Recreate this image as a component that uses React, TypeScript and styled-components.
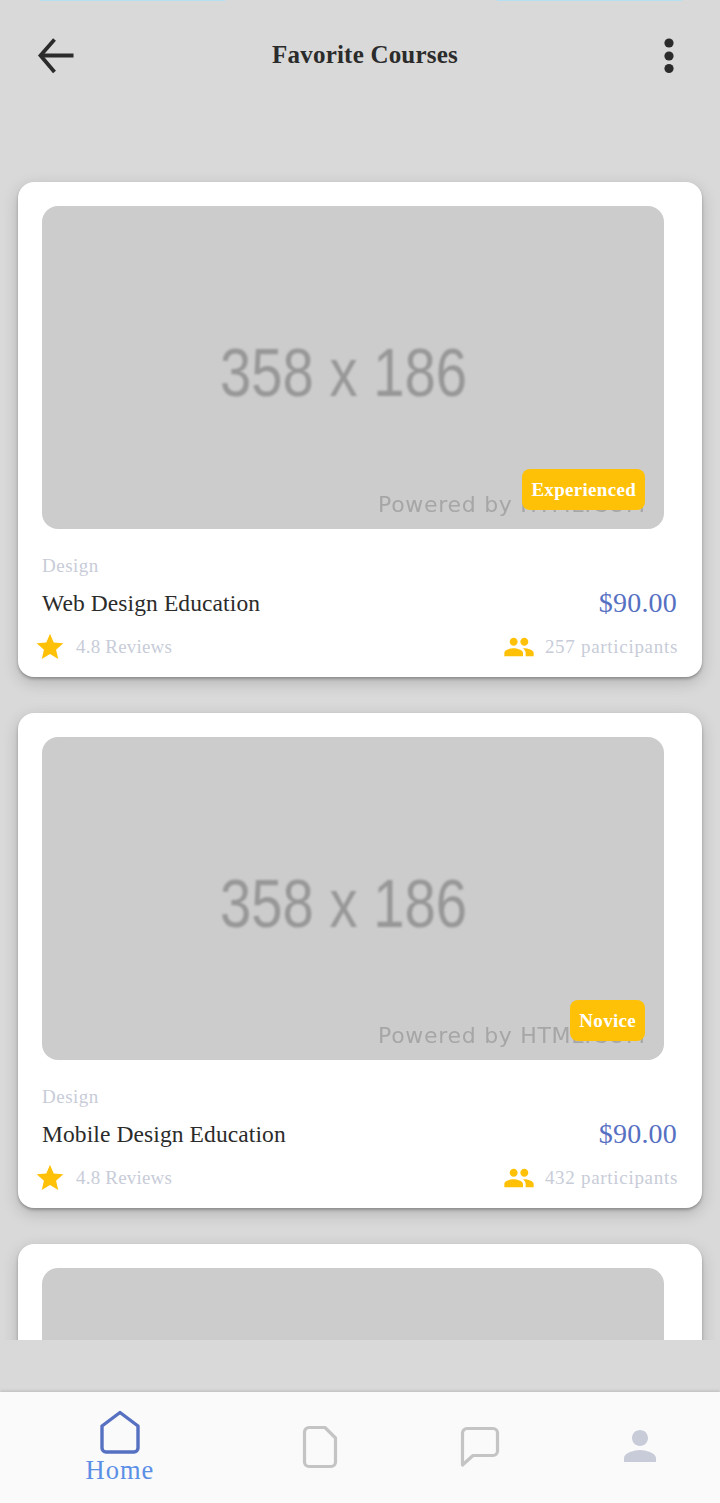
import styled, { createGlobalStyle } from "styled-components";
import { MdStar, MdPeople, MdPerson } from "react-icons/md";

const courses = [
  { id: 1, title: "Web Design Education", level: "Experienced", participants: 257 },
  { id: 2, title: "Mobile Design Education", level: "Novice", participants: 432 },
  { id: 3, title: "Web Design Education", level: "Experienced", participants: 257 },
];

export default function App() {
  return (
    <>
      <GlobalStyle />
      <Screen>
        <TopStrip>
          <StripSegment />
          <StripSegment />
        </TopStrip>
        <Header>
          <IconButton aria-label="Back">
            <svg width="40" height="40" viewBox="0 0 40 40" fill="none" stroke="#2b2b2b" strokeWidth="3.8">
              <path d="M5 19.5H37.5" />
              <path d="M18.5 3.5L4.5 19.5L18.5 36" />
            </svg>
          </IconButton>
          <Title>Favorite Courses</Title>
          <IconButton aria-label="More">
            <svg width="12" height="38" viewBox="0 0 12 38" fill="#2b2b2b">
              <circle cx="6" cy="6" r="4.6" />
              <circle cx="6" cy="19" r="4.6" />
              <circle cx="6" cy="31.5" r="4.6" />
            </svg>
          </IconButton>
        </Header>
        <CourseList>
          {courses.map((course) => (
            <Card key={course.id}>
              <Thumb>
                <svg width="622" height="323" viewBox="0 0 622 323">
                  <rect width="622" height="323" fill="#cccccc" />
                  <PlaceholderSize x="178" y="190" textLength="247" lengthAdjust="spacingAndGlyphs">
                    358 x 186
                  </PlaceholderSize>
                  <PlaceholderCredit x="336" y="306" textLength="267" lengthAdjust="spacing">
                    Powered by HTML.COM
                  </PlaceholderCredit>
                </svg>
                <Badge>{course.level}</Badge>
              </Thumb>
              <Category>Design</Category>
              <TitleRow>
                <CourseTitle>{course.title}</CourseTitle>
                <Price>$90.00</Price>
              </TitleRow>
              <MetaRow>
                <MetaGroup>
                  <StarIcon size={32} />
                  <MetaText $tracking={0.2}>4.8 Reviews</MetaText>
                </MetaGroup>
                <MetaGroup>
                  <PeopleIcon size={32} />
                  <MetaText $tracking={0.7}>{course.participants} participants</MetaText>
                </MetaGroup>
              </MetaRow>
            </Card>
          ))}
        </CourseList>
        <Spacer />
        <BottomNav>
          <NavItem $lift={0}>
            <svg width="42" height="45" viewBox="0 0 42 45" fill="none" stroke="#5670c2" strokeWidth="3.4" strokeLinejoin="round">
              <path d="M21 2.5L3 16V38a4 4 0 0 0 4 4H35a4 4 0 0 0 4-4V16Z" />
            </svg>
            <NavLabel>Home</NavLabel>
          </NavItem>
          <NavItem $lift={2}>
            <svg width="38" height="46" viewBox="0 0 38 46" fill="none" stroke="#c4c4c4" strokeWidth="3.2" strokeLinejoin="round">
              <path d="M8 3.5H24L34.5 14V38a4.5 4.5 0 0 1-4.5 4.5H8A4.5 4.5 0 0 1 3.5 38V8A4.5 4.5 0 0 1 8 3.5Z" />
            </svg>
          </NavItem>
          <NavItem $lift={2}>
            <svg width="42" height="43" viewBox="0 0 42 43" fill="none" stroke="#c4c4c4" strokeWidth="3.2" strokeLinejoin="round">
              <path d="M8 3.5H34A4.5 4.5 0 0 1 38.5 8V26A4.5 4.5 0 0 1 34 30.5H14L3.5 40V8A4.5 4.5 0 0 1 8 3.5Z" />
            </svg>
          </NavItem>
          <NavItem $lift={3}>
            <MdPerson size={48} color="#c8ccd8" />
          </NavItem>
        </BottomNav>
      </Screen>
    </>
  );
}

const GlobalStyle = createGlobalStyle`
  html, body {
    margin: 0;
    padding: 0;
    background: #d9d9d9;
  }

  * {
    box-sizing: border-box;
  }
`;

const Screen = styled.div`
  width: 720px;
  height: 1503px;
  display: flex;
  flex-direction: column;
  background: #d9d9d9;
  font-family: "Liberation Serif", serif;
  overflow: hidden;
`;

const TopStrip = styled.div`
  display: flex;
  gap: 272px;
  height: 1px;
  padding-left: 40px;
`;

const StripSegment = styled.div`
  width: 185px;
  background: #b5e0f2;
`;

const Header = styled.header`
  height: 109px;
  flex-shrink: 0;
  display: flex;
  align-items: center;
  justify-content: space-between;
  padding: 0 45px 0 36px;
`;

const IconButton = styled.div`
  display: flex;
  align-items: center;
  justify-content: center;
`;

const Title = styled.h1`
  margin: 0 9px 1px 0;
  font-size: 25px;
  letter-spacing: 0.2px;
  font-weight: 700;
  color: #2b2b2b;
`;

const CourseList = styled.main`
  height: 1230px;
  flex-shrink: 0;
  overflow: hidden;
  padding: 72px 18px 0;
  display: flex;
  flex-direction: column;
  gap: 36px;
`;

const Card = styled.article`
  flex-shrink: 0;
  height: 495px;
  padding: 24px;
  background: #ffffff;
  border-radius: 16px;
  box-shadow:
    0 2px 3px rgba(0, 0, 0, 0.25),
    0 5px 16px rgba(0, 0, 0, 0.18);
`;

const Thumb = styled.div`
  position: relative;
  width: 622px;
  height: 323px;
  border-radius: 16px;
  overflow: hidden;

  svg {
    display: block;
  }
`;

const PlaceholderSize = styled.text`
  font-family: "Liberation Sans", sans-serif;
  font-size: 68px;
  fill: #979797;
  filter: blur(0.8px);
`;

const PlaceholderCredit = styled.text`
  font-family: "DejaVu Sans", sans-serif;
  font-size: 22px;
  fill: #a6a6a6;
  filter: blur(0.5px);
`;

const Badge = styled.span`
  position: absolute;
  right: 19px;
  bottom: 19px;
  height: 41px;
  padding: 0 9px;
  display: flex;
  align-items: center;
  background: #ffc107;
  border-radius: 8px;
  color: #ffffff;
  font-size: 19px;
  letter-spacing: 0.3px;
  font-weight: 700;
`;

const Category = styled.div`
  margin-top: 26px;
  line-height: 22px;
  font-size: 19px;
  letter-spacing: 0.5px;
  color: #c8ccd8;
`;

const TitleRow = styled.div`
  margin-top: 10px;
  height: 32px;
  display: flex;
  align-items: center;
  justify-content: space-between;
  padding-right: 1px;
`;

const CourseTitle = styled.div`
  font-size: 23.5px;
  letter-spacing: 0.1px;
  color: #2b2b2b;
`;

const Price = styled.div`
  font-size: 28px;
  letter-spacing: 0.2px;
  color: #5670c2;
`;

const MetaRow = styled.div`
  margin-top: 12px;
  height: 32px;
  display: flex;
  align-items: center;
  justify-content: space-between;
`;

const MetaGroup = styled.div`
  display: flex;
  align-items: center;
  gap: 10px;
`;

const StarIcon = styled(MdStar)`
  margin-left: -8px;
  color: #ffc107;
`;

const PeopleIcon = styled(MdPeople)`
  color: #ffc107;
`;

const MetaText = styled.span<{ $tracking: number }>`
  font-size: 19px;
  letter-spacing: ${(p) => p.$tracking}px;
  color: #c8ccd8;
`;

const Spacer = styled.div`
  flex: 1;
`;

const BottomNav = styled.nav`
  height: 111px;
  flex-shrink: 0;
  display: grid;
  grid-template-columns: 240px 160px 160px 160px;
  align-items: center;
  background: #fafafa;
  box-shadow: 0 -1px 3px rgba(0, 0, 0, 0.14);
`;

const NavItem = styled.div<{ $lift: number }>`
  display: flex;
  flex-direction: column;
  align-items: center;
  padding-bottom: ${(p) => p.$lift}px;
`;

const NavLabel = styled.span`
  margin-top: 1px;
  font-size: 26.5px;
  line-height: 29px;
  letter-spacing: 1px;
  color: #5b8fe6;
`;
